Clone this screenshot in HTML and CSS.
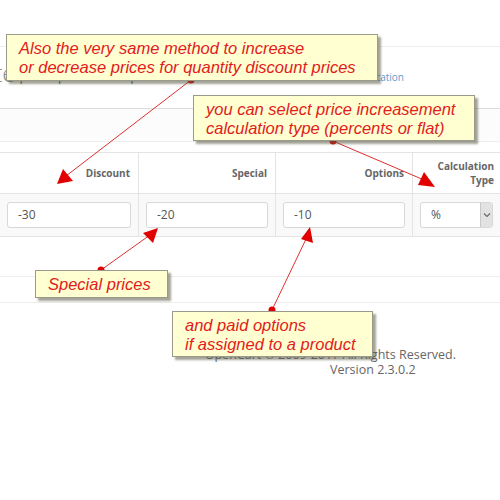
FILE: index.html
```html
<!DOCTYPE html>
<html>
<head>
<meta charset="utf-8">
<link rel="stylesheet" href="styles.css">
</head>
<body>
<div class="page">
  <div class="topbar"></div>
  <div class="page-header">
    <h1 class="title">Price Update</h1>
    <div class="subline">
      <span class="desc">Update prices of all products in one click</span>
      <span class="crumb">Home &gt; Modification</span>
    </div>
  </div>
  <div class="panel">
    <div class="panel-heading"></div>
    <div class="panel-body">
      <table class="grid">
        <thead>
          <tr>
            <th class="c1">Discount</th>
            <th class="c2">Special</th>
            <th class="c3">Options</th>
            <th class="c4">Calculation Type</th>
          </tr>
        </thead>
        <tbody>
          <tr>
            <td><div class="field">-30</div></td>
            <td><div class="field">-20</div></td>
            <td><div class="field">-10</div></td>
            <td><div class="select"><span class="sel-val">%</span><span class="sel-btn"><svg width="8" height="6" viewBox="0 0 8 6"><path d="M1 1.5 L4 4.5 L7 1.5" fill="none" stroke="#666" stroke-width="1.1"/></svg></span></div></td>
          </tr>
        </tbody>
      </table>
    </div>
  </div>
  <div class="rule"></div>
  <footer class="footer">
    <div class="copy">OpenCart &copy; 2009-2017 All Rights Reserved.</div>
    <div class="ver">Version 2.3.0.2</div>
  </footer>

  <svg class="arrows" width="500" height="500" viewBox="0 0 500 500">
    <g stroke="#e03030" stroke-width="1" fill="none">
      <line x1="191" y1="80" x2="66" y2="176"/>
      <line x1="333" y1="141" x2="424" y2="180"/>
      <line x1="101" y1="270" x2="150" y2="235"/>
      <line x1="272" y1="310" x2="307" y2="237"/>
    </g>
    <g fill="#e00000">
      <circle cx="191" cy="80" r="3.5"/>
      <circle cx="333" cy="141" r="3.5"/>
      <circle cx="101" cy="270" r="3.5"/>
      <circle cx="272" cy="310" r="3.5"/>
      <polygon points="57,184 63,169 73,181"/>
      <polygon points="435,187 418,185 424,172"/>
      <polygon points="158,228 153,243 143,233"/>
      <polygon points="310,227 313,243 301,239"/>
    </g>
  </svg>

  <div class="note n1">Also the very same method to increase<br>or decrease prices for quantity discount prices</div>
  <div class="note n2">you can select price increasement<br>calculation type (percents or flat)</div>
  <div class="note n3">Special prices</div>
  <div class="note n4">and paid options<br>if assigned to a product</div>
</div>
</body>
</html>
```
FILE: styles.css
```css
html, body {
  margin: 0;
  padding: 0;
  background: #ffffff;
}
.page {
  position: relative;
  width: 500px;
  height: 500px;
  overflow: hidden;
  font-family: "Open Sans", "DejaVu Sans", sans-serif;
  color: #666;
}
.topbar {
  height: 46px;
  border-bottom: 1px solid #eeeeee;
}
.page-header {
  height: 61px;
  position: relative;
}
.title {
  margin: 0;
  padding-top: 16px;
  font-size: 24px;
  font-weight: 300;
  color: #888;
  line-height: 20px;
  margin-left: -124px;
  white-space: nowrap;
}
.subline {
  display: flex;
  justify-content: space-between;
  align-items: baseline;
  font-size: 11px;
  line-height: 12px;
  margin-top: -13px;
  white-space: nowrap;
}
.desc {
  color: #555;
  font-size: 13px;
  padding-left: 10px;
}
.crumb {
  color: #5b9bd1;
  font-size: 10px;
  padding-right: 96px;
}
.panel {
  border-top: 1px solid #dddddd;
}
.panel-heading {
  height: 32px;
  background: #fcfcfc;
  border-bottom: 1px solid #eeeeee;
}
.panel-body {
  padding-top: 10px;
}
.grid {
  border-collapse: collapse;
  width: 502px;
  margin-left: -1px;
  table-layout: fixed;
}
.grid th, .grid td {
  border: 1px solid #e4e4e4;
}
.grid th {
  height: 40px;
  padding: 0 8px 0 7px;
  text-align: right;
  font-size: 10px;
  font-weight: 700;
  color: #666;
  line-height: 14px;
  background: #ffffff;
}
.c1 { width: 123px; }
.c2 { width: 121px; }
.c3 { width: 121px; }
.c4 { width: 74px; }
.grid td {
  height: 42px;
  padding: 0 7px;
  background: #f9f9f9;
}
.field, .select {
  height: 26px;
  box-sizing: border-box;
  border: 1px solid #d8d8d8;
  border-radius: 3px;
  background: #fff;
  font-size: 12px;
  color: #555;
  line-height: 24px;
  padding-left: 10px;
}
.select {
  display: flex;
  justify-content: space-between;
  padding-right: 0;
  overflow: hidden;
  margin-right: 2px;
}
.sel-btn {
  width: 11px;
  background: #e2e2e2;
  border-left: 1px solid #c8c8c8;
  display: flex;
  align-items: center;
  justify-content: center;
}
.rule {
  margin-top: 39px;
  height: 25px;
  border-top: 1px solid #eeeeee;
  border-bottom: 1px solid #eeeeee;
}
.footer {
  margin-top: 44px;
  font-size: 12.5px;
  line-height: 15px;
  color: #666;
}
.copy {
  text-align: right;
  padding-right: 44px;
}
.ver {
  padding-left: 330px;
}
.arrows {
  position: absolute;
  left: 0;
  top: 0;
}
.note {
  position: absolute;
  box-sizing: border-box;
  background: #ffffd2;
  border: 1px solid #9a9a8a;
  box-shadow: 3px 3px 2px rgba(90, 90, 70, 0.55);
  color: #e21b1b;
  font-family: "Liberation Sans", Arial, sans-serif;
  font-style: italic;
  font-size: 16.5px;
  line-height: 19px;
  white-space: nowrap;
}
.n1 { left: 6px; top: 34px; width: 372px; height: 47px; padding: 4px 0 0 12px; }
.n2 { left: 193px; top: 95px; width: 282px; height: 46px; padding: 4px 0 0 12px; }
.n3 { left: 35px; top: 270px; width: 133px; height: 28px; padding: 4px 0 0 12px; }
.n4 { left: 172px; top: 311px; width: 201px; height: 46px; padding: 4px 0 0 12px; }
```
